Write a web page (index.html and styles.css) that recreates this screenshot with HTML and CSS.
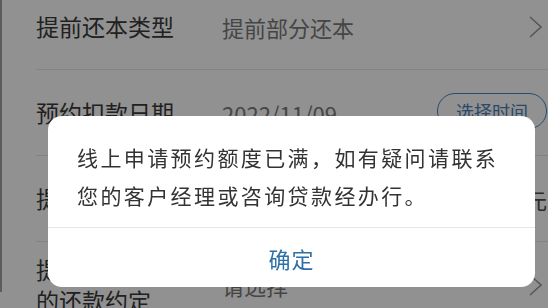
FILE: index.html
```html
<!DOCTYPE html>
<html lang="zh-CN">
<head>
<meta charset="utf-8">
<title>提前还本</title>
<link rel="stylesheet" href="styles.css">
</head>
<body>
<div class="page">
  <div class="list">
    <div class="row">
      <div class="label">提前还本类型</div>
      <div class="value">提前部分还本</div>
      <svg class="arrow" viewBox="0 0 13 22" width="13" height="22"><path d="M1 1 L12 11 L1 21" fill="none" stroke="currentColor" stroke-width="1.6"/></svg>
    </div>
    <div class="row">
      <div class="label">预约扣款日期</div>
      <div class="value">2022/11/09</div>
      <button class="pick">选择时间</button>
    </div>
    <div class="row">
      <div class="label">提前还款金额</div>
      <div class="value amount">10,000.00元</div>
    </div>
    <div class="row tall">
      <div class="label">提前还款之后的还款约定</div>
      <div class="value">请选择</div>
      <svg class="arrow" viewBox="0 0 13 22" width="13" height="22"><path d="M1 1 L12 11 L1 21" fill="none" stroke="currentColor" stroke-width="1.6"/></svg>
    </div>
  </div>
</div>
<div class="mask"></div>
<div class="dialog">
  <p class="msg">线上申请预约额度已满，如有疑问请联系您的客户经理或咨询贷款经办行。</p>
  <div class="actions"><button class="ok">确定</button></div>
</div>
</body>
</html>
```
FILE: styles.css
```css
html, body {
  margin: 0;
  padding: 0;
  height: 100%;
  overflow: hidden;
}
body {
  font-family: "Noto Sans CJK SC", "Noto Sans", sans-serif;
  background: #ffffff;
}
.page {
  height: 100%;
  border-left: 2px solid #a2a2a2;
  box-sizing: border-box;
}
.list {
  margin-top: -16px;
  padding-left: 34px;
}
.row {
  display: flex;
  align-items: center;
  min-height: 85px;
  border-bottom: 1px solid #e6e6e6;
  box-sizing: content-box;
}
.row.tall {
  padding: 10px 0;
  min-height: 65px;
}
.label {
  flex: 0 0 150px;
  margin-right: 36px;
  font-size: 23px;
  line-height: 31px;
  color: #3a3a3a;
}
.value {
  flex: 1;
  font-size: 22px;
  color: #7a7a7a;
}
.value.amount {
  text-align: right;
  color: #4a4a4a;
  padding-right: 1px;
}
.arrow {
  color: #999999;
  margin-right: 6px;
  flex: none;
}
.pick {
  flex: none;
  width: 110px;
  height: 36px;
  margin-right: 1px;
  margin-top: -4px;
  border: 1.5px solid #4a82bd;
  border-radius: 18px;
  background: transparent;
  color: #4a80b8;
  font-family: inherit;
  font-size: 18px;
  padding: 0;
}
.mask {
  position: fixed;
  inset: 0;
  background: rgba(0, 0, 0, 0.43);
}
.dialog {
  position: fixed;
  left: 48px;
  top: 116px;
  width: 487px;
  background: #ffffff;
  border-radius: 14px;
  overflow: hidden;
}
.msg {
  margin: 0;
  padding: 22px 29px 13px 29px;
  font-size: 21px;
  line-height: 38px;
  letter-spacing: 2.4px;
  color: #333333;
}
.actions {
  border-top: 1px solid #e6e6e6;
  height: 59px;
  display: flex;
  align-items: center;
  justify-content: center;
}
.ok {
  border: none;
  background: transparent;
  font-family: inherit;
  font-size: 22px;
  letter-spacing: 1px;
  color: #2f6fa7;
  padding: 0;
}
```
